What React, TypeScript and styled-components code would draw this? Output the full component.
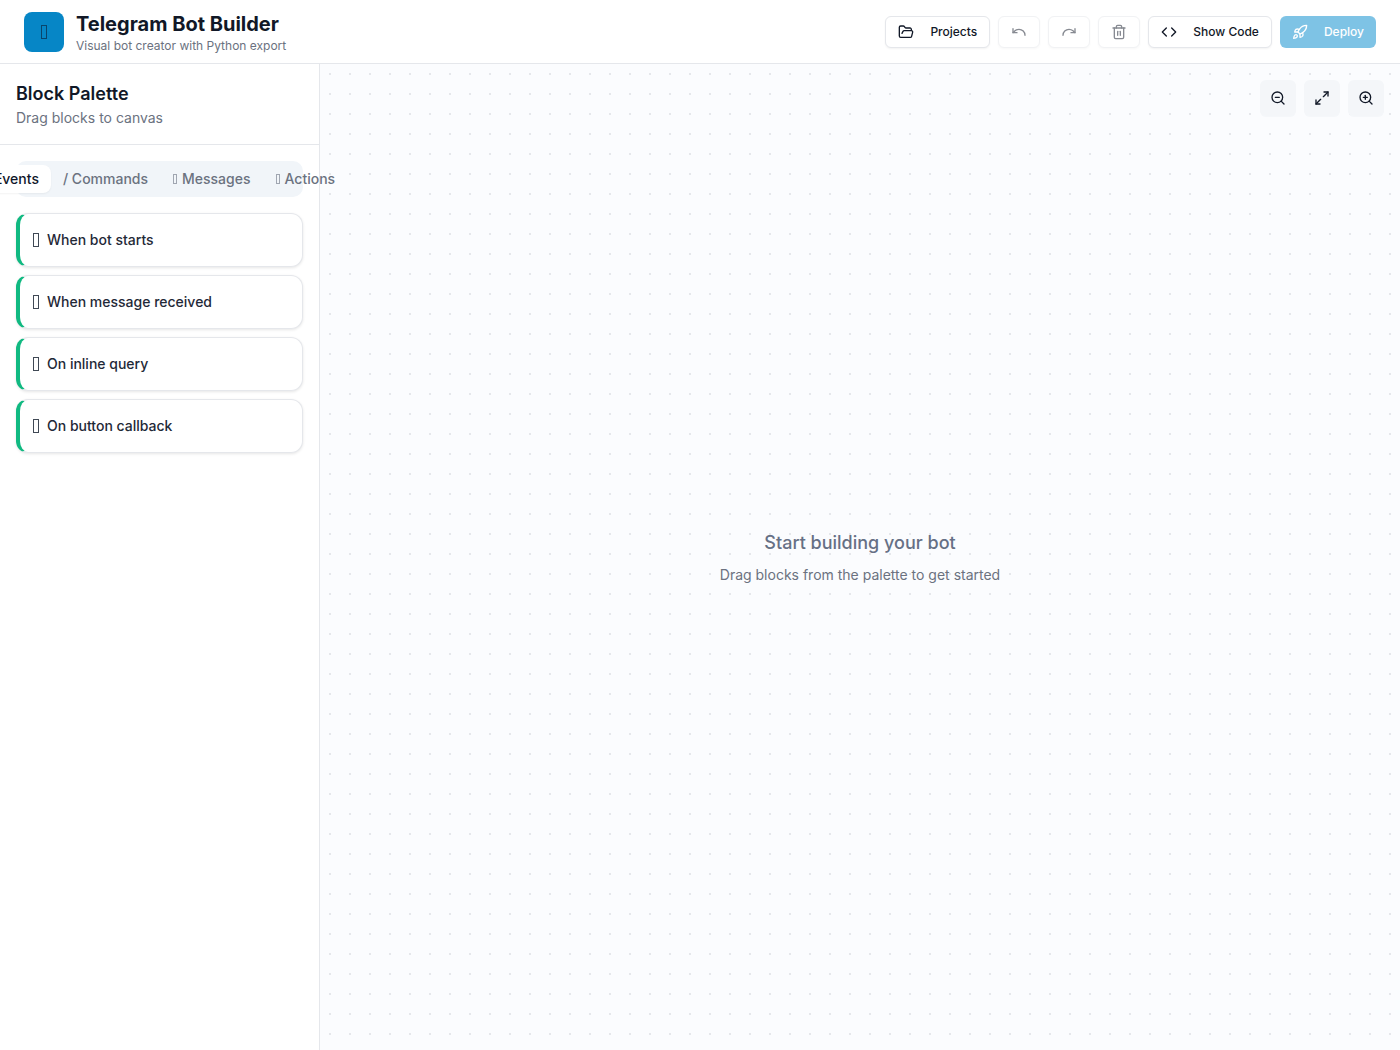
import styled, { createGlobalStyle } from "styled-components";
import {
  Code,
  FolderOpen,
  Maximize2,
  Redo,
  Rocket,
  Trash2,
  Undo,
  ZoomIn,
  ZoomOut,
} from "lucide-react";

const GlobalStyle = createGlobalStyle`
  html, body {
    margin: 0;
    padding: 0;
    background: #ffffff;
    font-family: Inter, "Noto Sans", sans-serif;
    color: #111827;
  }
  * { box-sizing: border-box; }
`;

const Page = styled.div`
  display: flex;
  flex-direction: column;
  height: 1050px;
  overflow: hidden;
`;

const Header = styled.header`
  display: flex;
  align-items: center;
  justify-content: space-between;
  flex-shrink: 0;
  height: 64px;
  padding: 0 24px;
  background: #ffffff;
  border-bottom: 1px solid #e5e7eb;
`;

const Brand = styled.div`
  display: flex;
  align-items: center;
  gap: 12px;
`;

const Logo = styled.div`
  display: flex;
  align-items: center;
  justify-content: center;
  width: 40px;
  height: 40px;
  padding-right: 2px;
  border-radius: 8px;
  background: #0686c6;
  color: #0b3a5c;
`;

/* empty glyph box, the emoji in these spots has no font in the reference */
const GlyphBox = styled.span<{ $small?: boolean }>`
  flex-shrink: 0;
  display: block;
  width: ${(p) => (p.$small ? "4px" : "6px")};
  height: ${(p) => (p.$small ? "10px" : "14px")};
  margin-left: 1px;
  border: 1px solid currentColor;
  opacity: ${(p) => (p.$small ? 0.6 : 0.85)};
`;

const Title = styled.h1`
  margin: 0;
  font-size: 20px;
  line-height: 28px;
  font-weight: 700;
  color: #111827;
`;

const Subtitle = styled.p`
  margin: 0;
  font-size: 12px;
  line-height: 16px;
  color: #6b7280;
`;

const Toolbar = styled.div`
  display: flex;
  align-items: center;
  gap: 8px;
`;

const ToolButton = styled.button<{ $faded?: boolean }>`
  display: inline-flex;
  align-items: center;
  gap: 16px;
  height: 32px;
  padding: 0 12px;
  border: 1px solid #e5e7eb;
  border-radius: 6px;
  background: #ffffff;
  box-shadow: 0 1px 2px rgba(0, 0, 0, 0.05);
  font-family: inherit;
  font-size: 12px;
  font-weight: 500;
  color: #111827;
  opacity: ${(p) => (p.$faded ? 0.5 : 1)};
`;

const DeployButton = styled(ToolButton)`
  border: none;
  background: #0088cc;
  color: #ffffff;
  opacity: 0.5;
  box-shadow: none;
`;

const Body = styled.div`
  display: flex;
  flex: 1;
  min-height: 0;
`;

const Sidebar = styled.aside`
  position: relative;
  z-index: 1;
  flex-shrink: 0;
  width: 320px;
  background: #ffffff;
  border-right: 1px solid #e5e7eb;
`;

const SidebarHead = styled.div`
  padding: 16px;
  border-bottom: 1px solid #e5e7eb;
`;

const SidebarTitle = styled.h2`
  margin: 0;
  font-size: 18px;
  line-height: 28px;
  font-weight: 600;
  color: #111827;
`;

const SidebarHint = styled.p`
  margin: 0;
  font-size: 14px;
  line-height: 20px;
  color: #6b7280;
`;

const SidebarContent = styled.div`
  padding: 16px;
`;

const TabList = styled.div`
  display: flex;
  justify-content: center;
  align-items: center;
  height: 36px;
  padding: 4px;
  margin-bottom: 16px;
  border-radius: 10px;
  background: #f1f5f9;
`;

const Tab = styled.div<{ $active?: boolean }>`
  flex-shrink: 0;
  display: flex;
  align-items: center;
  gap: 5px;
  padding: 6px 12px;
  border-radius: 8px;
  font-size: 14px;
  line-height: 16px;
  font-weight: 500;
  white-space: nowrap;
  color: ${(p) => (p.$active ? "#0f172a" : "#6b7280")};
  background: ${(p) => (p.$active ? "#ffffff" : "transparent")};
  box-shadow: ${(p) => (p.$active ? "0 1px 2px rgba(0, 0, 0, 0.05)" : "none")};
`;

const BlockList = styled.div`
  display: flex;
  flex-direction: column;
  gap: 8px;
`;

const Block = styled.div`
  display: flex;
  align-items: center;
  gap: 8px;
  height: 54px;
  padding: 0 12px 2px;
  border: 1px solid #e5e7eb;
  border-left: 4px solid #10b981;
  border-radius: 12px;
  background: #ffffff;
  box-shadow: 0 1px 3px rgba(0, 0, 0, 0.1);
  font-size: 14px;
  font-weight: 500;
  color: #1f2937;

  ${GlyphBox} {
    margin-top: 2px;
  }
`;

const Canvas = styled.main`
  position: relative;
  display: flex;
  align-items: center;
  justify-content: center;
  flex: 1;
  background-color: #fbfcfe;
  background-image: radial-gradient(circle, #e5e7eb 1px, transparent 1px);
  background-size: 20px 20px;
`;

const ZoomControls = styled.div`
  position: absolute;
  top: 16px;
  right: 16px;
  display: flex;
  gap: 8px;
`;

const ZoomButton = styled.button`
  display: flex;
  align-items: center;
  justify-content: center;
  width: 36px;
  height: 36px;
  padding: 0;
  border: none;
  border-radius: 6px;
  background: #f4f6f9;
  box-shadow: 0 1px 0 #f5f7fa;
  color: #111827;
`;

const EmptyState = styled.div`
  text-align: center;
`;

const EmptyTitle = styled.h3`
  margin: 0 0 8px;
  font-size: 18px;
  line-height: 28px;
  font-weight: 500;
  color: #667085;
`;

const EmptyHint = styled.p`
  margin: 0;
  font-size: 14px;
  line-height: 20px;
  color: #6b7280;
`;

const tabs = [
  { label: "Events", glyph: true },
  { label: "/ Commands", glyph: false },
  { label: "Messages", glyph: true },
  { label: "Actions", glyph: true },
];

const blocks = [
  "When bot starts",
  "When message received",
  "On inline query",
  "On button callback",
];

const App = () => {
  return (
    <Page>
      <GlobalStyle />
      <Header>
        <Brand>
          <Logo>
            <GlyphBox />
          </Logo>
          <div>
            <Title>Telegram Bot Builder</Title>
            <Subtitle>Visual bot creator with Python export</Subtitle>
          </div>
        </Brand>
        <Toolbar>
          <ToolButton>
            <FolderOpen size={16} />
            Projects
          </ToolButton>
          <ToolButton $faded>
            <Undo size={16} />
          </ToolButton>
          <ToolButton $faded>
            <Redo size={16} />
          </ToolButton>
          <ToolButton $faded>
            <Trash2 size={16} />
          </ToolButton>
          <ToolButton>
            <Code size={16} />
            Show Code
          </ToolButton>
          <DeployButton>
            <Rocket size={16} />
            Deploy
          </DeployButton>
        </Toolbar>
      </Header>
      <Body>
        <Sidebar>
          <SidebarHead>
            <SidebarTitle>Block Palette</SidebarTitle>
            <SidebarHint>Drag blocks to canvas</SidebarHint>
          </SidebarHead>
          <SidebarContent>
            <TabList>
              {tabs.map((t, i) => (
                <Tab key={t.label} $active={i === 0}>
                  {t.glyph && <GlyphBox $small />}
                  {t.label}
                </Tab>
              ))}
            </TabList>
            <BlockList>
              {blocks.map((b) => (
                <Block key={b}>
                  <GlyphBox />
                  {b}
                </Block>
              ))}
            </BlockList>
          </SidebarContent>
        </Sidebar>
        <Canvas>
          <ZoomControls>
            <ZoomButton>
              <ZoomOut size={16} />
            </ZoomButton>
            <ZoomButton>
              <Maximize2 size={16} />
            </ZoomButton>
            <ZoomButton>
              <ZoomIn size={16} />
            </ZoomButton>
          </ZoomControls>
          <EmptyState>
            <EmptyTitle>Start building your bot</EmptyTitle>
            <EmptyHint>Drag blocks from the palette to get started</EmptyHint>
          </EmptyState>
        </Canvas>
      </Body>
    </Page>
  );
};

export default App;
